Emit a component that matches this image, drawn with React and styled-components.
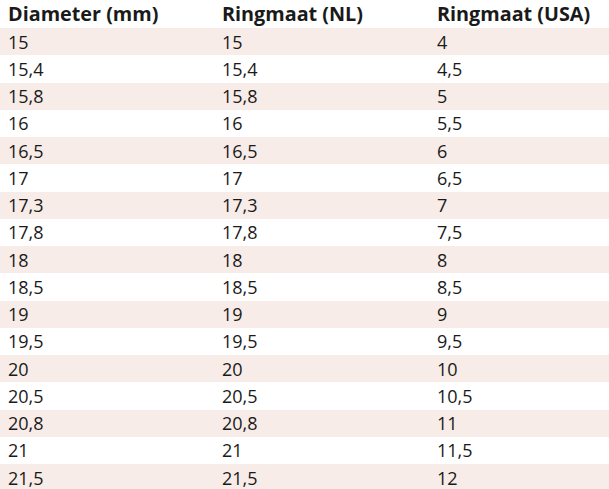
import React from 'react'
import styled, { createGlobalStyle } from 'styled-components'

const GlobalStyle = createGlobalStyle`
  html, body { margin: 0; padding: 0; background: #fff; }
  body { font-family: "Open Sans", "Liberation Sans", sans-serif; color: #1a1a1a; }
`

const Table = styled.div`
  width: 609px;
  display: flex;
  flex-direction: column;
`

const Row = styled.div`
  display: grid;
  grid-template-columns: 214px 215px 1fr;
  align-items: center;
  height: ${p => (p.$head ? '28px' : '27.25px')};
  background: ${p => (p.$striped ? '#f7ece7' : '#fff')};
  font-size: ${p => (p.$head ? '19.8px' : '18px')};
  font-weight: ${p => (p.$head ? 700 : 400)};
  line-height: 1;
`

const Cell = styled.div`
  padding-left: 8px;
  white-space: nowrap;
`

const rows = [
  ['15', '15', '4'],
  ['15,4', '15,4', '4,5'],
  ['15,8', '15,8', '5'],
  ['16', '16', '5,5'],
  ['16,5', '16,5', '6'],
  ['17', '17', '6,5'],
  ['17,3', '17,3', '7'],
  ['17,8', '17,8', '7,5'],
  ['18', '18', '8'],
  ['18,5', '18,5', '8,5'],
  ['19', '19', '9'],
  ['19,5', '19,5', '9,5'],
  ['20', '20', '10'],
  ['20,5', '20,5', '10,5'],
  ['20,8', '20,8', '11'],
  ['21', '21', '11,5'],
  ['21,5', '21,5', '12'],
]

export default function App() {
  return (
    <>
      <GlobalStyle />
      <Table>
        <Row $head>
          <Cell>Diameter (mm)</Cell>
          <Cell>Ringmaat (NL)</Cell>
          <Cell>Ringmaat (USA)</Cell>
        </Row>
        {rows.map((r, i) => (
          <Row key={i} $striped={i % 2 === 0}>
            {r.map((c, j) => <Cell key={j}>{c}</Cell>)}
          </Row>
        ))}
      </Table>
    </>
  )
}
